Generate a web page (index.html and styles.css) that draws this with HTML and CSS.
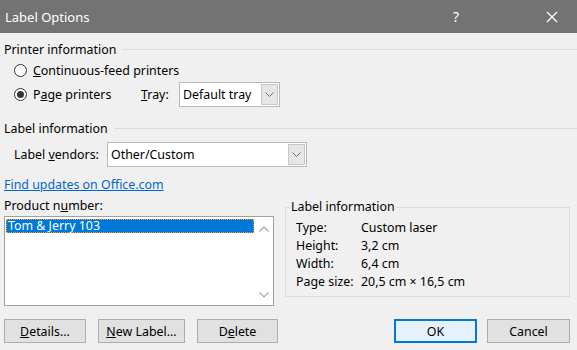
FILE: index.html
```html
<!DOCTYPE html>
<html lang="en">
<head>
    <meta charset="UTF-8">
    <title>Label Options</title>
    <link rel="stylesheet" href="styles.css">
</head>
<body>
    <div class="dialog">
        <div class="title-bar">
            <span class="title">Label Options</span>
            <span class="help">?</span>
            <span class="close">
                <svg width="12" height="12" viewBox="0 0 12 12"><path d="M1 1L11 11M11 1L1 11" stroke="#fff" stroke-width="1.2" fill="none"/></svg>
            </span>
        </div>

        <div class="content">
            <div class="group-head"><span>Printer information</span><i></i></div>
            <div class="radio-row">
                <span class="radio"></span>
                <span><u>C</u>ontinuous-feed printers</span>
            </div>
            <div class="radio-row">
                <span class="radio checked"></span>
                <span class="page-label">P<u>a</u>ge printers</span>
                <span class="tray-label"><u>T</u>ray:</span>
                <div class="select tray">
                    <span class="value">Default tray</span>
                    <span class="drop"><svg width="9" height="5" viewBox="0 0 9 5"><path d="M0.5 0.5L4.5 4.5L8.5 0.5" stroke="#6d6d6d" fill="none"/></svg></span>
                </div>
            </div>

            <div class="group-head second"><span>Label information</span><i></i></div>
            <div class="vendor-row">
                <span class="vendor-label">Label <u>v</u>endors:</span>
                <div class="select vendor">
                    <span class="value">Other/Custom</span>
                    <span class="drop"><svg width="9" height="5" viewBox="0 0 9 5"><path d="M0.5 0.5L4.5 4.5L8.5 0.5" stroke="#6d6d6d" fill="none"/></svg></span>
                </div>
            </div>
            <a class="link" href="#">Find updates on Office.com</a>

            <div class="main-row">
                <div class="product">
                    <div class="product-label">Product n<u>u</u>mber:</div>
                    <div class="listbox">
                        <div class="items">
                            <div class="item selected">Tom &amp; Jerry 103</div>
                        </div>
                        <div class="scrollbar">
                            <svg width="10" height="6" viewBox="0 0 10 6"><path d="M0.5 5.5L5 1L9.5 5.5" stroke="#a6a6a6" stroke-width="1.2" fill="none"/></svg>
                            <svg width="10" height="6" viewBox="0 0 10 6"><path d="M0.5 0.5L5 5L9.5 0.5" stroke="#a6a6a6" stroke-width="1.2" fill="none"/></svg>
                        </div>
                    </div>
                </div>
                <fieldset class="info">
                    <legend>Label information</legend>
                    <div class="info-grid">
                        <span>Type:</span><span>Custom laser</span>
                        <span>Height:</span><span>3,2 cm</span>
                        <span>Width:</span><span>6,4 cm</span>
                        <span>Page size:</span><span>20,5 cm × 16,5 cm</span>
                    </div>
                </fieldset>
            </div>

            <div class="buttons">
                <button class="btn details"><u>D</u>etails...</button>
                <button class="btn new-label"><u>N</u>ew Label...</button>
                <button class="btn delete">D<u>e</u>lete</button>
                <span class="spacer"></span>
                <button class="btn ok">OK</button>
                <button class="btn cancel">Cancel</button>
            </div>
        </div>
    </div>
</body>
</html>
```

FILE: styles.css
```css
body {
    margin: 0;
    font-family: 'Noto Sans', sans-serif;
    font-size: 12.4px;
    color: #000;
    background: #f0f0f0;
}
.dialog {
    width: 577px;
    height: 350px;
    background: #f0f0f0;
    overflow: hidden;
}
.title-bar {
    height: 33px;
    background: #737373;
    color: #fff;
    display: flex;
    align-items: center;
    padding-left: 5px;
}
.title {
    font-size: 13px;
    flex: 1;
}
.help {
    font-size: 14px;
    width: 20px;
    text-align: center;
    margin-right: 76px;
}
.close {
    width: 20px;
    display: flex;
    justify-content: center;
    margin-right: 15px;
}
.content {
    padding: 0 7px 0 4px;
}
.group-head {
    display: flex;
    align-items: center;
    height: 18px;
    margin-top: 7px;
}
.group-head i {
    flex: 1;
    border-top: 1px solid #dcdcdc;
    margin-left: 6px;
    margin-right: -7px;
}
.group-head.second {
    margin-top: 13px;
}
.radio-row {
    display: flex;
    align-items: center;
    height: 24px;
    padding-left: 10px;
}
.radio {
    width: 13px;
    height: 13px;
    border: 1px solid #333;
    border-radius: 50%;
    background: #fff;
    box-sizing: border-box;
    margin-right: 6px;
    display: flex;
    align-items: center;
    justify-content: center;
}
.radio.checked::after {
    content: "";
    width: 7px;
    height: 7px;
    border-radius: 50%;
    background: #333;
}
.page-label {
    width: 108px;
}
.tray-label {
    width: 38px;
}
.select {
    display: flex;
    align-items: center;
    height: 25px;
    box-sizing: border-box;
    border: 1px solid #b9b9b9;
    background: #fff;
}
.select .value {
    flex: 1;
    padding-left: 3px;
}
.select .drop {
    width: 17px;
    height: 21px;
    margin-right: 1px;
    background: #e6e6e6;
    border: 1px solid #c8c8c8;
    box-sizing: border-box;
    display: flex;
    align-items: center;
    justify-content: center;
}
.tray {
    width: 101px;
}
.vendor-row {
    display: flex;
    align-items: center;
    height: 26px;
    margin-top: 4px;
    padding-left: 10px;
}
.vendor-label {
    width: 93px;
}
.vendor {
    width: 200px;
}
.link {
    display: block;
    color: #0066cc;
    margin-top: 9px;
    height: 18px;
}
.main-row {
    display: flex;
    gap: 11px;
}
.product {
    width: 270px;
}
.product-label {
    height: 16px;
    margin-top: 3px;
}
.listbox {
    display: flex;
    height: 90px;
    margin-top: 3px;
    box-sizing: border-box;
    border: 1px solid #a0a0a0;
    background: #fff;
}
.items {
    flex: 1;
    padding: 2px 0 0 1px;
}
.item.selected {
    background: #0078d7;
    color: #fff;
    outline: 1px dotted #f0a030;
    outline-offset: -1px;
    height: 14px;
    line-height: 14px;
    padding-left: 2px;
}
.scrollbar {
    width: 19px;
    display: flex;
    flex-direction: column;
    justify-content: space-between;
    align-items: center;
    padding: 9px 0 7px;
    box-sizing: border-box;
}
.info {
    flex: 1;
    margin: 0;
    margin-top: 5px;
    height: 98px;
    box-sizing: border-box;
    border: 1px solid #dcdcdc;
    padding: 0 0 0 10px;
}
.info legend {
    padding: 0 1px;
    margin-left: -6px;
    line-height: 16px;
}
.info-grid {
    display: grid;
    grid-template-columns: 65px auto;
    line-height: 18px;
    margin-top: 4px;
}
.buttons {
    display: flex;
    gap: 12px;
    margin-top: 13px;
}
.spacer {
    flex: 1;
}
.btn {
    font-family: 'Noto Sans', sans-serif;
    font-size: 12.4px;
    height: 24px;
    box-sizing: border-box;
    border: 1px solid #adadad;
    background: #e1e1e1;
    padding: 0;
    color: #000;
}
.details {
    width: 82px;
}
.new-label {
    width: 87px;
}
.delete {
    width: 81px;
}
.ok {
    width: 83px;
    background: #e5f1fb;
    border: 1px solid #0078d7;
    box-shadow: inset 0 0 0 1px #0078d7;
    margin-right: -2px;
}
.cancel {
    width: 83px;
}
```
